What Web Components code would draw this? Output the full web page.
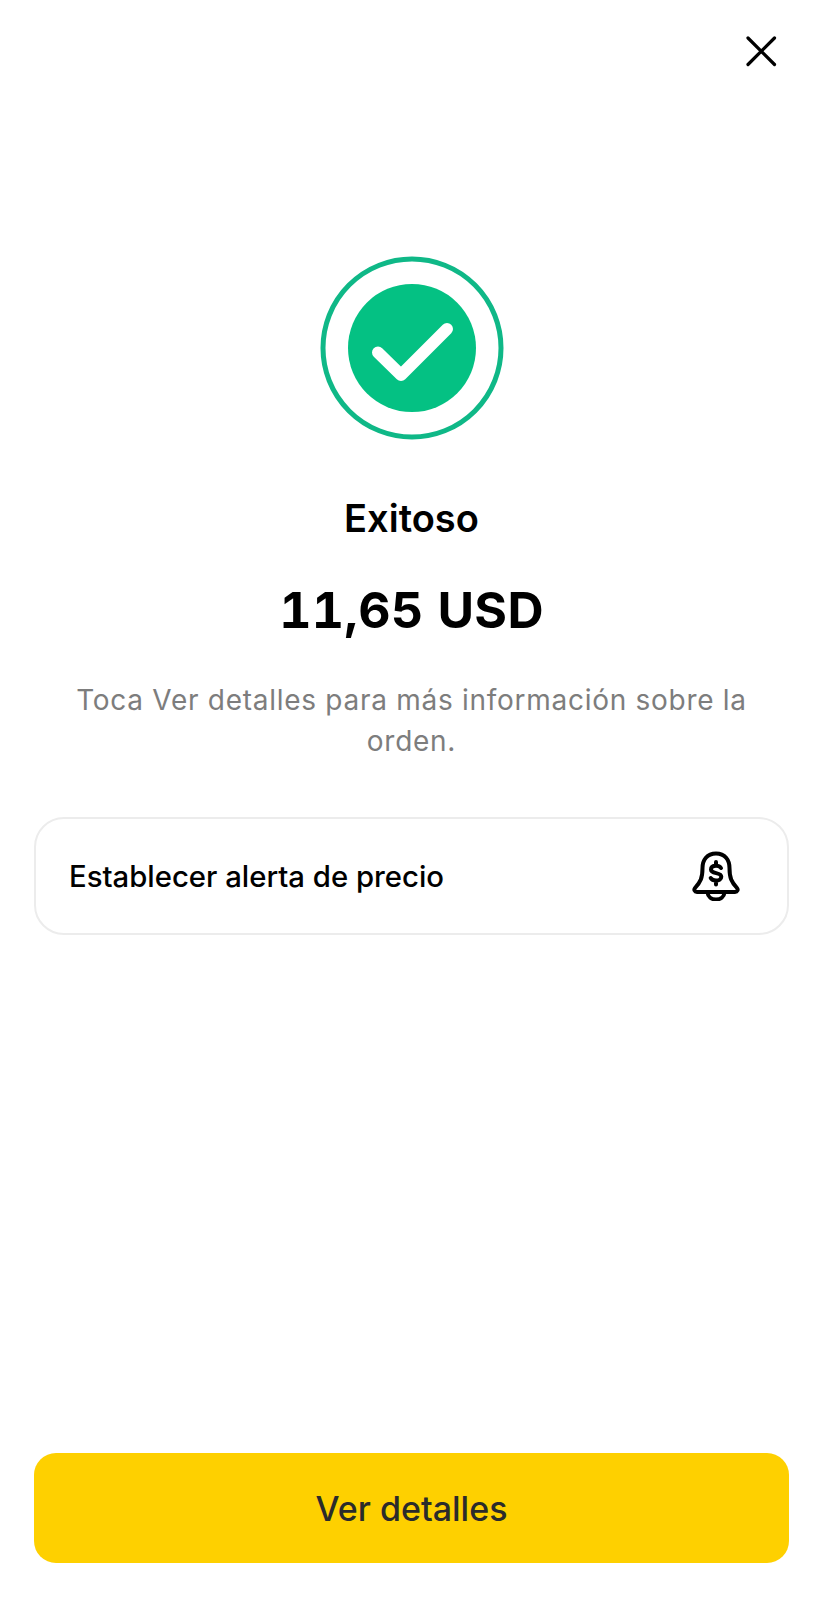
<!DOCTYPE html>
<html lang="es"><head><meta charset="utf-8"><style>
html,body{margin:0;padding:0;background:#fff}
body{font-family:Inter,"Noto Sans",sans-serif;color:#000}
</style></head><body>
<result-page>
<close-button slot="close"></close-button>
<status-badge slot="badge"></status-badge>
<span slot="title">Exitoso</span>
<span slot="amount">11,65 USD</span>
<span slot="note">Toca Ver detalles para más información sobre la orden.</span>
<alert-row slot="row">Establecer alerta de precio</alert-row>
<primary-button slot="action">Ver detalles</primary-button>
</result-page>
<script>
function def(name,html){customElements.define(name,class extends HTMLElement{constructor(){super();this.attachShadow({mode:'open'}).innerHTML=html}})}
def('result-page',`<style>
:host{display:flex;flex-direction:column;align-items:stretch;height:1600px;box-sizing:border-box;padding:34px 34px 37px}
.top{display:flex;justify-content:flex-end;padding-right:10px}
.badge{display:flex;justify-content:center;margin-top:186px}
.title{text-align:center;font-size:38px;font-weight:600;line-height:46px;margin-top:55px}
.amount{text-align:center;font-size:50px;font-weight:700;line-height:64px;margin-top:37px;font-variant-numeric:tabular-nums;letter-spacing:.35px}
.note{text-align:center;font-size:28px;line-height:41px;color:#7d7d7d;margin-top:38px;padding:0 20px;letter-spacing:.72px}
.row{margin-top:55px}
.action{margin-top:auto}
</style>
<div class="top"><slot name="close"></slot></div>
<div class="badge"><slot name="badge"></slot></div>
<div class="title"><slot name="title"></slot></div>
<div class="amount"><slot name="amount"></slot></div>
<div class="note"><slot name="note"></slot></div>
<div class="row"><slot name="row"></slot></div>
<div class="action"><slot name="action"></slot></div>`);
def('close-button',`<style>:host{display:block;width:36px;height:36px}svg{display:block}</style>
<svg width="36" height="36" viewBox="0 0 36 36" fill="none" stroke="#000" stroke-width="3.2" stroke-linecap="round"><path d="M5 4 31.500 30.500M31.500 4 5 30.500"/></svg>`);
def('status-badge',`<style>:host{display:block;width:184px;height:184px}svg{display:block}</style>
<svg width="184" height="184" viewBox="0 0 184 184"><circle cx="92" cy="92" r="89" fill="#fff" stroke="#0fb887" stroke-width="5"/><circle cx="92" cy="92" r="64" fill="#04c183"/><path d="M58 96.500 81 119 127 73" fill="none" stroke="#fff" stroke-width="12" stroke-linecap="round" stroke-linejoin="round"/></svg>`);
def('alert-row',`<style>:host{display:flex;align-items:center;justify-content:space-between;height:118px;box-sizing:border-box;padding:0 47px 0 33px;border:2px solid #ececec;border-radius:30px;font-size:29.300px;font-weight:450;color:#000}
svg{display:block}</style>
<span><slot></slot></span>
<svg width="48" height="50" viewBox="0 0 48 50" fill="none" stroke="#000" stroke-width="4" stroke-linecap="round" stroke-linejoin="round"><path d="M24 2.500C15 2.500 10.500 9 10.500 17c0 10-2 14-7.500 20-1.300 1.500-.5 4 2 4h38c2.500 0 3.300-2.500 2-4-5.500-6-7.500-10-7.500-20 0-8-4.500-14.500-13.500-14.500Z"/><path d="M15.500 41.500c.5 4.500 4 7 8.500 7s8-2.500 8.500-7"/><path d="M29 17c-1-1.500-2.800-2.300-5-2.300-3 0-5 1.400-5 3.800 0 5 10.300 2.200 10.300 7.200 0 2.500-2.300 3.900-5.300 3.900-2.500 0-4.400-.9-5.300-2.500M24 11v3.500M24 29.800v3.700"/></svg>`);
def('primary-button',`<style>:host{display:flex;align-items:center;justify-content:center;height:110px;background:#fed000;border-radius:22px;font-size:34px;font-weight:450;color:#2b2b2b}</style><slot></slot>`);
</script>
</body></html>
